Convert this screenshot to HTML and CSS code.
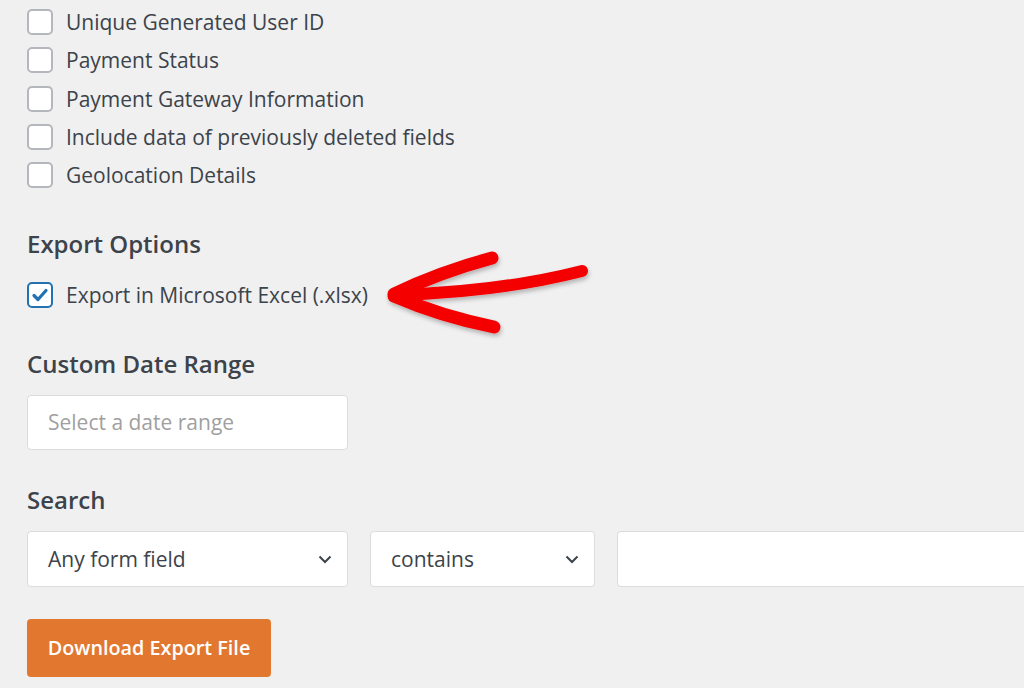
FILE: index.html
```html
<!DOCTYPE html>
<html lang="en">
<head>
    <meta charset="UTF-8">
    <meta name="viewport" content="width=device-width, initial-scale=1.0">
    <title>Export Entries</title>
    <link rel="stylesheet" href="styles.css">
</head>
<body>

    <div class="export-page">

        <!-- Additional Information -->
        <div class="field-list">
            <label class="check-row"><span class="box"></span>Unique Generated User ID</label>
            <label class="check-row"><span class="box"></span>Payment Status</label>
            <label class="check-row"><span class="box"></span>Payment Gateway Information</label>
            <label class="check-row"><span class="box"></span>Include data of previously deleted fields</label>
            <label class="check-row"><span class="box"></span>Geolocation Details</label>
        </div>

        <!-- Export Options -->
        <h3 class="section-title">Export Options</h3>
        <label class="check-row">
            <span class="box checked">
                <svg viewBox="0 0 20 20" width="20" height="20"><path d="M4 10.5l4 4 8-9" fill="none" stroke="#2271b1" stroke-width="3.2" stroke-linecap="round" stroke-linejoin="round"/></svg>
            </span>Export in Microsoft Excel (.xlsx)
        </label>

        <!-- Date Range -->
        <h3 class="section-title">Custom Date Range</h3>
        <div class="date-input">Select a date range</div>

        <!-- Search -->
        <h3 class="section-title">Search</h3>
        <div class="search-row">
            <div class="select field-select">Any form field
                <svg class="chevron" viewBox="0 0 16 16" width="16" height="16"><path d="M2.5 5.5l5.5 5.5 5.5-5.5" fill="none" stroke="#3c434a" stroke-width="2"/></svg>
            </div>
            <div class="select compare-select">contains
                <svg class="chevron" viewBox="0 0 16 16" width="16" height="16"><path d="M2.5 5.5l5.5 5.5 5.5-5.5" fill="none" stroke="#3c434a" stroke-width="2"/></svg>
            </div>
            <div class="search-value"></div>
        </div>

        <button class="download-btn">Download Export File</button>
    </div>

    <!-- Annotation arrow -->
    <svg class="annotation" width="1024" height="688" viewBox="0 0 1024 688">
        <defs>
            <filter id="shadow" x="-10%" y="-20%" width="130%" height="150%">
                <feDropShadow dx="1" dy="3" stdDeviation="2" flood-color="#000" flood-opacity="0.25"/>
            </filter>
        </defs>
        <g fill="none" stroke="#f40000" stroke-linecap="round" filter="url(#shadow)">
            <path d="M394 295 Q500 292 582 271" stroke-width="12"/>
            <path d="M394 294 Q440 272 492 258" stroke-width="13"/>
            <path d="M394 296 Q440 316 494 327" stroke-width="13"/>
        </g>
    </svg>

</body>
</html>
```

FILE: styles.css
```css
/* Page */
body {
    margin: 0;
    background: #f0f0f1;
    font-family: "Open Sans", "Noto Sans", sans-serif;
    color: #3c434a;
    overflow: hidden;
}

.export-page {
    display: flex;
    flex-direction: column;
    align-items: flex-start;
    padding: 3px 0 0 27px;
}

/* Checkbox rows */
.field-list {
    display: flex;
    flex-direction: column;
}

.check-row {
    display: flex;
    align-items: center;
    height: 38.3px;
    font-size: 21px;
    color: #3c434a;
}

.check-row .box {
    box-sizing: border-box;
    width: 26px;
    height: 26px;
    margin-right: 13px;
    background: #fff;
    border: 2px solid #b4b7bb;
    border-radius: 5px;
    display: flex;
    align-items: center;
    justify-content: center;
}

.check-row .box.checked {
    border-color: #2271b1;
}

/* Headings */
.section-title {
    margin: 35px 0 16px;
    font-size: 24px;
    font-weight: 600;
    line-height: 30px;
    color: #3c434a;
}

/* Date range */
.date-input {
    box-sizing: border-box;
    width: 321px;
    height: 55px;
    padding: 0 20px;
    display: flex;
    align-items: center;
    background: #fff;
    border: 1px solid #dcdcde;
    border-radius: 4px;
    font-size: 21px;
    color: #a0a0a0;
}

/* Search */
.search-row {
    display: flex;
    align-self: stretch;
}

.select, .search-value {
    box-sizing: border-box;
    height: 56px;
    background: #fff;
    border: 1px solid #dcdcde;
    border-radius: 4px;
    font-size: 21px;
    color: #3c434a;
}

.select {
    display: flex;
    align-items: center;
    justify-content: space-between;
    padding: 0 14px 0 20px;
}

.field-select {
    width: 321px;
    margin-right: 22px;
}

.compare-select {
    width: 225px;
    margin-right: 22px;
}

.search-value {
    flex: 1;
    border-right: none;
    border-radius: 4px 0 0 4px;
}

/* Button */
.download-btn {
    margin-top: 32px;
    width: 244px;
    height: 58px;
    border: none;
    border-radius: 4px;
    background: #e27730;
    color: #fff;
    font-family: inherit;
    font-size: 19.8px;
    font-weight: 600;
}

/* Annotation overlay */
.annotation {
    position: absolute;
    top: 0;
    left: 0;
    pointer-events: none;
}
```
